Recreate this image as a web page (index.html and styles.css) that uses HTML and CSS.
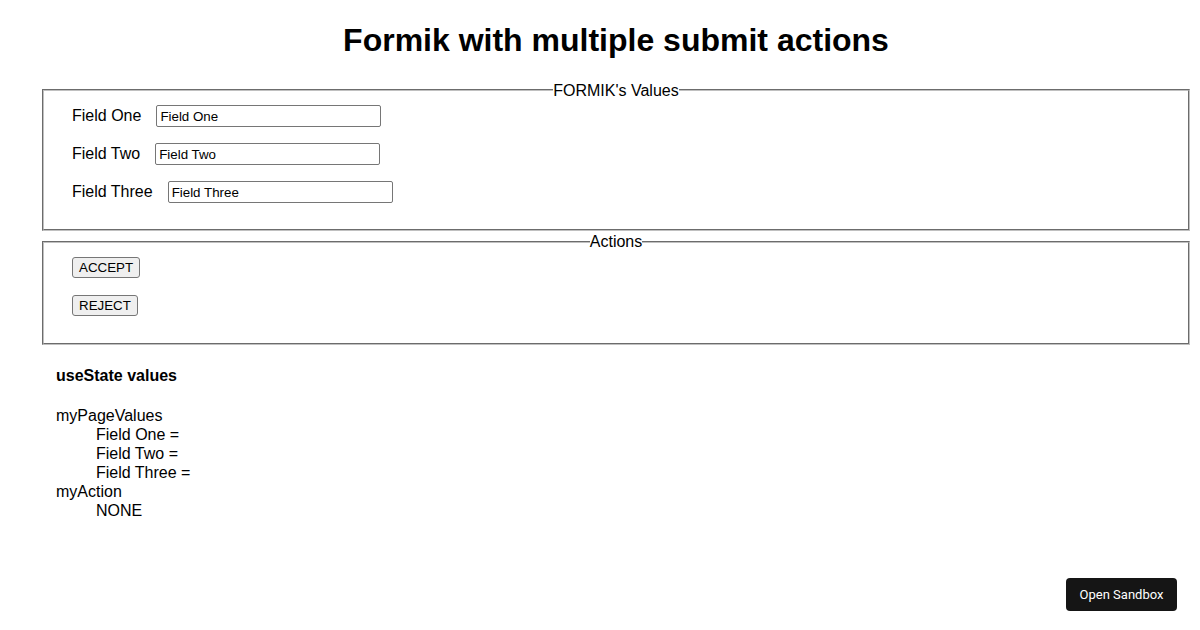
FILE: index.html
```html
<!DOCTYPE html>
<html>
<head>
<meta charset="utf-8">
<link rel="stylesheet" href="styles.css">
</head>
<body>
<div class="app">
  <h1 class="title">Formik with multiple submit actions</h1>
  <form>
    <fieldset class="group">
      <legend class="legend">FORMIK's Values</legend>
      <div class="row"><label class="label">Field One</label><input class="field" type="text" value="Field One"></div>
      <div class="row"><label class="label">Field Two</label><input class="field" type="text" value="Field Two"></div>
      <div class="row"><label class="label">Field Three</label><input class="field" type="text" value="Field Three"></div>
    </fieldset>
    <fieldset class="group actions">
      <legend class="legend">Actions</legend>
      <div class="row btn-row"><button class="btn" type="button">ACCEPT</button></div>
      <div class="row btn-row"><button class="btn" type="button">REJECT</button></div>
    </fieldset>
  </form>
  <div class="state">
    <h4 class="state-title">useState values</h4>
    <div class="line">myPageValues</div>
    <div class="line indent">Field One =</div>
    <div class="line indent">Field Two =</div>
    <div class="line indent">Field Three =</div>
    <div class="line">myAction</div>
    <div class="line indent">NONE</div>
  </div>
</div>
<a class="sandbox">Open Sandbox</a>
</body>
</html>
```
FILE: styles.css
```css
body {
  margin: 0 8px;
  font-family: "Liberation Sans", Arial, sans-serif;
  font-size: 16px;
  line-height: 19px;
  color: #000;
  background: #fff;
}
.app {
  padding-left: 32px;
  padding-top: 0.1px;
}
.title {
  font-size: 32px;
  line-height: 37px;
  font-weight: bold;
  text-align: center;
  margin: 22px 0 21.44px;
}
form {
  margin: 0;
}
.group {
  margin: 0 2px;
  padding: 0.35em 12px 0.625em;
  border: 2px groove rgb(192, 192, 192);
}
.actions {
  margin-top: 1px;
}
.legend {
  margin: 0 auto;
  padding: 0;
  font-size: 16px;
}
.row {
  padding-left: 16px;
  margin-bottom: 16px;
}
.btn-row {
  min-height: 22px;
}
.label {
  margin-right: 15px;
}
.field {
  box-sizing: border-box;
  width: 225px;
  height: 22px;
  padding: 1px 3px;
  border: 1px solid #767676;
  border-radius: 2px;
  font-family: "Liberation Sans", Arial, sans-serif;
  font-size: 13.33px;
  color: #000;
}
.btn {
  box-sizing: border-box;
  height: 21px;
  padding: 1px 6px;
  border: 1px solid #767676;
  border-radius: 3px;
  background: #efefef;
  font-family: "Liberation Sans", Arial, sans-serif;
  font-size: 13.33px;
  color: #000;
}
.state {
  padding-left: 16px;
}
.state-title {
  font-size: 16px;
  font-weight: bold;
  margin: 21.28px 0;
}
.indent {
  padding-left: 40px;
}
.sandbox {
  position: fixed;
  right: 23px;
  bottom: 19px;
  box-sizing: border-box;
  width: 111px;
  height: 33px;
  display: flex;
  align-items: center;
  justify-content: center;
  background: #151515;
  color: #fff;
  border-radius: 4px;
  font-family: Roboto, "Liberation Sans", sans-serif;
  font-size: 13px;
  line-height: normal;
}
```
